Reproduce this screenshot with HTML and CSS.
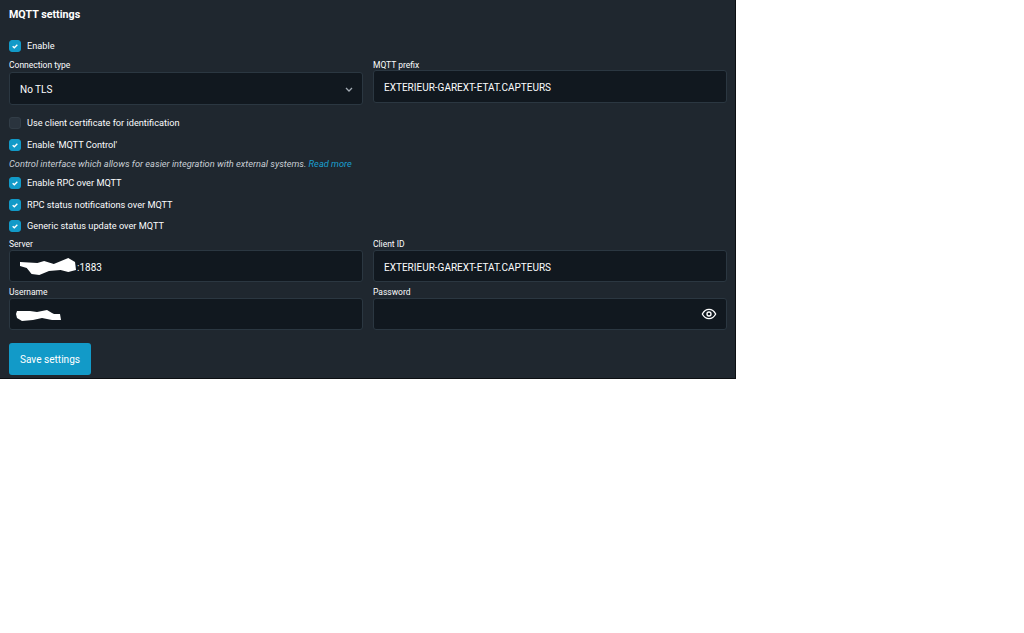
FILE: index.html
```html
<!DOCTYPE html>
<html lang="en">
<head>
<meta charset="utf-8">
<title>MQTT settings</title>
<link rel="stylesheet" href="styles.css">
</head>
<body>
<main class="panel">
  <h1 class="title">MQTT settings</h1>
  <div class="check first"><span class="box on"><svg viewBox="0 0 12 12"><path d="M3.2 6.2l2 2L8.8 4.4"/></svg></span>Enable</div>
  <div class="grid top">
    <div class="field"><label>Connection type</label>
      <div class="control select">No TLS<svg class="chev" viewBox="0 0 8 5"><path d="M1 1l3 3 3-3"/></svg></div></div>
    <div class="field"><label>MQTT prefix</label>
      <div class="control prefix">EXTERIEUR-GAREXT-ETAT.CAPTEURS</div></div>
  </div>
  <div class="check cert"><span class="box"></span>Use client certificate for identification</div>
  <div class="check control-check"><span class="box on"><svg viewBox="0 0 12 12"><path d="M3.2 6.2l2 2L8.8 4.4"/></svg></span>Enable 'MQTT Control'</div>
  <p class="hint">Control interface which allows for easier integration with external systems. <a href="#">Read more</a></p>
  <div class="check rpc"><span class="box on"><svg viewBox="0 0 12 12"><path d="M3.2 6.2l2 2L8.8 4.4"/></svg></span>Enable RPC over MQTT</div>
  <div class="check rpc2"><span class="box on"><svg viewBox="0 0 12 12"><path d="M3.2 6.2l2 2L8.8 4.4"/></svg></span>RPC status notifications over MQTT</div>
  <div class="check rpc2"><span class="box on"><svg viewBox="0 0 12 12"><path d="M3.2 6.2l2 2L8.8 4.4"/></svg></span>Generic status update over MQTT</div>
  <div class="grid creds">
    <div class="field"><label>Server</label>
      <div class="control"><svg class="scribble s1" viewBox="0 0 58 17" preserveAspectRatio="none"><path d="M0 4L18 5L25 3L35 6L45 2L50 0L57 4L58 12L50 14L42 12L30 13L20 17L12 16L7 10L0 8Z"/></svg><span class="port">:1883</span></div></div>
    <div class="field"><label>Client ID</label>
      <div class="control">EXTERIEUR-GAREXT-ETAT.CAPTEURS</div></div>
    <div class="field"><label>Username</label>
      <div class="control"><svg class="scribble s2" viewBox="0 0 45 11"><path d="M1 1L14 1L21 2L31 0L36 3L38 4L44 4L45 10L36 10L26 8L17 10L6 11L1 8L0 4Z"/></svg></div></div>
    <div class="field"><label>Password</label>
      <div class="control pass"><svg class="eye" viewBox="0 0 24 24"><path d="M2 12s3.6-7 10-7 10 7 10 7-3.6 7-10 7-10-7-10-7z"/><circle cx="12" cy="12" r="3"/></svg></div></div>
  </div>
  <button class="save" type="button">Save settings</button>
</main>
</body>
</html>
```
FILE: styles.css
```css
* { box-sizing: border-box; }
html, body { margin: 0; background: #fff; }
body { font-family: Roboto, "Open Sans", sans-serif; color: #fff; }
.panel { width: 736px; height: 379px; background: #1f272f; border-right: 1px solid #0c0f12; border-bottom: 1px solid #0c0f12; padding: 0 9px; overflow: hidden; }
.title { margin: 0; padding-top: 7px; height: 40px; font-size: 10.7px; line-height: 15px; font-weight: 700; }
.check { display: flex; align-items: center; gap: 6px; height: 12px; font-size: 9.2px; line-height: 12px; color: #fbfcfd; }
.first { margin-bottom: 7px; }
.box { width: 12px; height: 12px; border-radius: 3px; background: #2a343e; border: 1px solid #323d47; display: flex; }
.box.on { background: #129ac8; border-color: #129ac8; }
.box svg { width: 10px; height: 10px; fill: none; stroke: #fff; stroke-width: 1.6; }
.grid { display: grid; grid-template-columns: 354px 354px; column-gap: 10px; }
.field label { display: block; height: 12px; font-size: 8.5px; line-height: 12px; color: #fbfcfd; }
.control { height: 33px; display: flex; align-items: center; padding: 2px 10px 0; background: #11181f; border: 1px solid #2b3741; border-radius: 3px; font-size: 10px; color: #fbfcfd; position: relative; }
.select { justify-content: space-between; margin-top: 1px; }
.prefix { margin-top: -1px; }
.chev { width: 8px; height: 5px; margin-right: -1px; fill: none; stroke: #a3abb3; stroke-width: 1.3; }
.cert { margin-top: 12px; }
.control-check { margin-top: 10px; }
.hint { margin: 7px 0 7px; height: 12px; font-size: 9.25px; line-height: 12px; font-style: italic; color: #c8ced4; }
.hint a { color: #1a9fd0; text-decoration: none; }
.rpc2 { margin-top: 9.5px; }
.creds { margin-top: 6px; row-gap: 4px; }
.creds .control { height: 32px; }
.scribble { fill: #fff; position: absolute; }
.s1 { left: 10px; top: 7px; width: 56px; height: 17px; }
.s2 { left: 6px; top: 11px; width: 45px; height: 11px; }
.port { margin-left: 57px; }
.pass { justify-content: flex-end; padding: 0 9px 0 0; }
.eye { width: 16px; height: 16px; fill: none; stroke: #fff; stroke-width: 2; }
.save { display: block; margin-top: 13px; width: 82px; height: 32px; background: #129ac8; border: 0; border-radius: 3px; color: #fff; font: 400 10.1px Roboto, "Open Sans", sans-serif; padding: 0; }
```
